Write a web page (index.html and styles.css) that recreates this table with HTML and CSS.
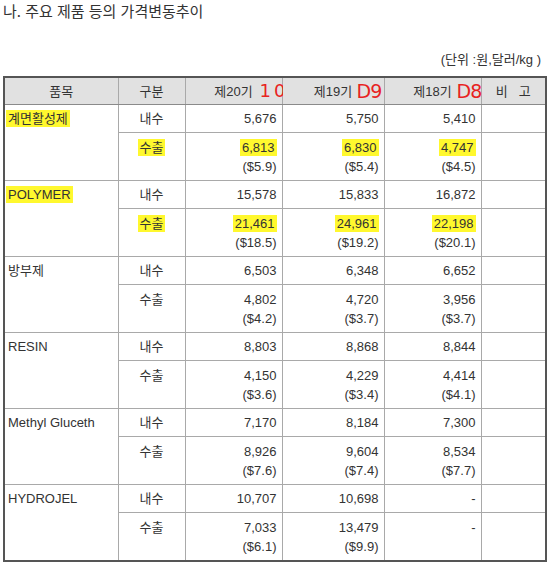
FILE: index.html
```html
<!DOCTYPE html>
<html lang="ko">
<head>
<meta charset="utf-8">
<link rel="stylesheet" href="styles.css">
</head>
<body>
<div class="title">나. 주요 제품 등의 가격변동추이</div>
<div class="unit">(단위 :원,달러/kg )</div>
<table class="price">
  <colgroup>
    <col class="c1"><col class="c2"><col class="c3"><col class="c4"><col class="c5"><col class="c6">
  </colgroup>
  <thead>
    <tr>
      <th>품목</th>
      <th>구분</th>
      <th class="ann-cell">제20기<span class="ann a20">10</span></th>
      <th class="ann-cell">제19기<span class="ann a19">D9</span></th>
      <th class="ann-cell">제18기<span class="ann a18">D8</span></th>
      <th>비&nbsp;&nbsp;&nbsp;고</th>
    </tr>
  </thead>
  <tbody>
    <tr class="dom">
      <td class="item" rowspan="2"><span class="hl hl-item">계면활성제</span></td>
      <td class="kind">내수</td>
      <td class="num">5,676</td><td class="num">5,750</td><td class="num">5,410</td><td></td>
    </tr>
    <tr class="exp">
      <td class="kind"><span class="hl">수출</span></td>
      <td class="num"><span class="hl">6,813</span><br>($5.9)</td>
      <td class="num"><span class="hl">6,830</span><br>($5.4)</td>
      <td class="num"><span class="hl">4,747</span><br>($4.5)</td><td></td>
    </tr>

    <tr class="dom">
      <td class="item" rowspan="2"><span class="hl hl-item">POLYMER</span></td>
      <td class="kind">내수</td>
      <td class="num">15,578</td><td class="num">15,833</td><td class="num">16,872</td><td></td>
    </tr>
    <tr class="exp">
      <td class="kind"><span class="hl">수출</span></td>
      <td class="num"><span class="hl">21,461</span><br>($18.5)</td>
      <td class="num"><span class="hl">24,961</span><br>($19.2)</td>
      <td class="num"><span class="hl">22,198</span><br>($20.1)</td><td></td>
    </tr>

    <tr class="dom">
      <td class="item" rowspan="2">방부제</td>
      <td class="kind">내수</td>
      <td class="num">6,503</td><td class="num">6,348</td><td class="num">6,652</td><td></td>
    </tr>
    <tr class="exp">
      <td class="kind">수출</td>
      <td class="num">4,802<br>($4.2)</td>
      <td class="num">4,720<br>($3.7)</td>
      <td class="num">3,956<br>($3.7)</td><td></td>
    </tr>

    <tr class="dom">
      <td class="item" rowspan="2">RESIN</td>
      <td class="kind">내수</td>
      <td class="num">8,803</td><td class="num">8,868</td><td class="num">8,844</td><td></td>
    </tr>
    <tr class="exp">
      <td class="kind">수출</td>
      <td class="num">4,150<br>($3.6)</td>
      <td class="num">4,229<br>($3.4)</td>
      <td class="num">4,414<br>($4.1)</td><td></td>
    </tr>

    <tr class="dom">
      <td class="item" rowspan="2">Methyl Gluceth</td>
      <td class="kind">내수</td>
      <td class="num">7,170</td><td class="num">8,184</td><td class="num">7,300</td><td></td>
    </tr>
    <tr class="exp">
      <td class="kind">수출</td>
      <td class="num">8,926<br>($7.6)</td>
      <td class="num">9,604<br>($7.4)</td>
      <td class="num">8,534<br>($7.7)</td><td></td>
    </tr>

    <tr class="dom">
      <td class="item" rowspan="2">HYDROJEL</td>
      <td class="kind">내수</td>
      <td class="num">10,707</td><td class="num">10,698</td><td class="num">-</td><td></td>
    </tr>
    <tr class="exp last">
      <td class="kind">수출</td>
      <td class="num">7,033<br>($6.1)</td>
      <td class="num">13,479<br>($9.9)</td>
      <td class="num">-</td><td></td>
    </tr>
  </tbody>
</table>
</body>
</html>
```
FILE: styles.css
```css
html, body {
  margin: 0;
  padding: 0;
  background: #ffffff;
}
body {
  font-family: "Liberation Sans", "Noto Sans CJK KR", sans-serif;
  color: #333333;
  width: 548px;
  height: 563px;
  overflow: hidden;
}
.title {
  font-family: "Noto Sans CJK KR", "Liberation Sans", sans-serif;
  font-size: 15px;
  line-height: 22px;
  height: 22px;
  padding-left: 3px;
  color: #333;
}
.unit {
  margin-top: 30px;
  height: 16px;
  line-height: 16px;
  font-size: 13px;
  text-align: right;
  padding-right: 7px;
  margin-bottom: 8px;
}
.price {
  border-collapse: collapse;
  table-layout: fixed;
  width: 542px;
  margin-left: 3px;
  border: 2px solid #555555;
  font-size: 13px;
}
.c1 { width: 114px; }
.c2 { width: 67px; }
.c3 { width: 97px; }
.c4 { width: 102px; }
.c5 { width: 97px; }
.c6 { width: 65px; }
.price th, .price td {
  border: 1px solid #a9a9a9;
  padding: 0;
  line-height: 19px;
}
.price th {
  background: #e1e1e1;
  font-weight: normal;
  height: 26px;
  text-align: center;
  vertical-align: middle;
  color: #333;
  border-bottom: 1px solid #8a8a8a;
}
.ann-cell {
  position: relative;
}
.ann {
  position: absolute;
  top: 3px;
  color: #e8231f;
  font-family: "DejaVu Sans", sans-serif;
  font-size: 19px;
  line-height: 20px;
  letter-spacing: -1px;
}
.a20 { left: 74px; letter-spacing: 3px; font-size: 18px; }
.a19 { left: 74px; }
.a18 { left: 72px; }
.dom td { height: 27px; vertical-align: middle; }
.exp td { height: 42px; vertical-align: top; padding-top: 5px; }
.price td.item {
  vertical-align: top;
  padding-top: 4px;
  padding-left: 3px;
  text-align: left;
}
.kind { text-align: center; }
.num { text-align: right; padding-right: 5px !important; }
.hl {
  background: #fff82e;
  padding: 1px 2px;
}
.hl-item {
  margin-left: -2px;
}
```
